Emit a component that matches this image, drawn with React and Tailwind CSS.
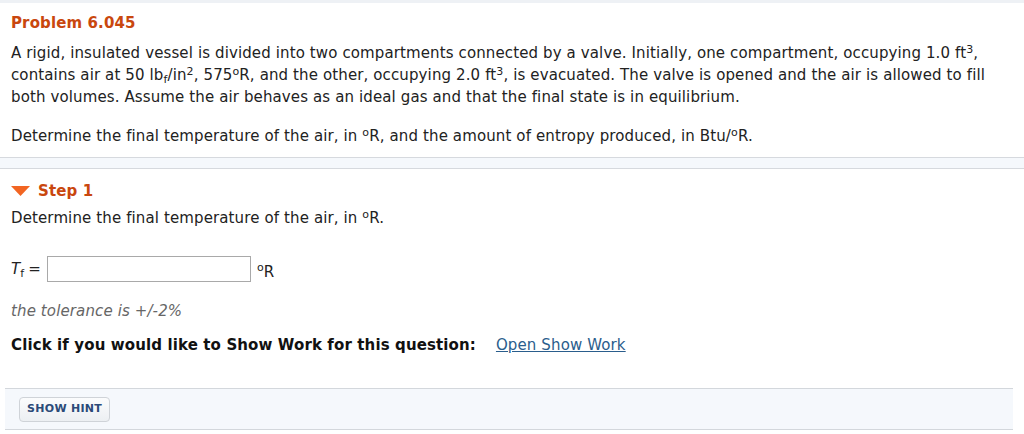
import React from "react";

const font = { fontFamily: '"DejaVu Sans", Verdana, sans-serif' };

export default function App() {
  return (
    <div className="w-[1024px] h-[434px] bg-white text-[#222] overflow-hidden font-['DejaVu_Sans',Verdana,sans-serif] tracking-[0.12px]">
      <div className="h-[3px] bg-[#eef1f5]" />
      <div className="px-[11px]">
        <h1 className="mt-[11px] text-[15px] leading-[18px] font-bold text-[#c9470e]">Problem 6.045</h1>
        <p className="mt-[10px] text-[15px] leading-[22px] whitespace-nowrap">
          A rigid, insulated vessel is divided into two compartments connected by a valve. Initially, one compartment, occupying 1.0 ft<sup className="text-[11px]">3</sup>,
          <br />
          contains air at 50 lb<sub className="text-[11px]">f</sub>/in<sup className="text-[11px]">2</sup>, 575<sup className="text-[11px]">o</sup>R, and the other, occupying 2.0 ft<sup className="text-[11px]">3</sup>, is evacuated. The valve is opened and the air is allowed to fill
          <br />
          both volumes. Assume the air behaves as an ideal gas and that the final state is in equilibrium.
        </p>
        <p className="mt-[17px] text-[15px] leading-[22px]">
          Determine the final temperature of the air, in <sup className="text-[11px]">o</sup>R, and the amount of entropy produced, in Btu/<sup className="text-[11px]">o</sup>R.
        </p>
      </div>
      <div className="mt-[10px] h-[12px] bg-[#f5f8fc] border-y border-[#d6d9de]" />
      <div className="px-[11px]">
        <div className="mt-[13px] flex items-center gap-[8px]">
          <svg width="19" height="10" viewBox="0 0 19 10" className="shrink-0">
            <polygon points="0,0 19,0 9.5,10" fill="#f26522" />
          </svg>
          <span className="text-[15px] leading-[18px] font-bold text-[#c9470e]">Step 1</span>
        </div>
        <p className="mt-[7px] text-[15px] leading-[22px]">
          Determine the final temperature of the air, in <sup className="text-[11px]">o</sup>R.
        </p>
        <div className="mt-[27px] flex items-center h-[26px]">
          <span className="text-[15px] italic">T<sub className="text-[11px] not-italic">f</sub></span>
          <span className="text-[15px] ml-[4px]">=</span>
          <input
            type="text"
            className="ml-[6px] w-[204px] h-[26px] border border-[#a9a9a9] bg-white outline-none"
          />
          <span className="ml-[6px] mt-[6px] text-[15px]"><sup className="text-[11px]">o</sup>R</span>
        </div>
        <p className="mt-[18px] text-[15px] leading-[22px] italic text-[#666]">the tolerance is +/-2%</p>
        <div className="mt-[12px] flex items-center text-[15px] leading-[22px]">
          <span className="font-bold text-[#111]">Click if you would like to Show Work for this question:</span>
          <a href="#" className="ml-[20px] text-[#2a5d8c] underline">Open Show Work</a>
        </div>
      </div>
      <div className="mt-[32px] mx-[5px] w-[1008px] h-[42px] bg-[#f5f8fc] border-y border-[#d3d7dc] flex items-center px-[14px]">
        <button
          type="button"
          className="h-[25px] px-[7px] rounded-[4px] border border-[#cfd3d8] bg-gradient-to-b from-[#fbfcfd] to-[#eceff2] text-[11px] font-bold text-[#2b4a78] tracking-[0.3px]"
          style={font}
        >
          SHOW HINT
        </button>
      </div>
    </div>
  );
}
